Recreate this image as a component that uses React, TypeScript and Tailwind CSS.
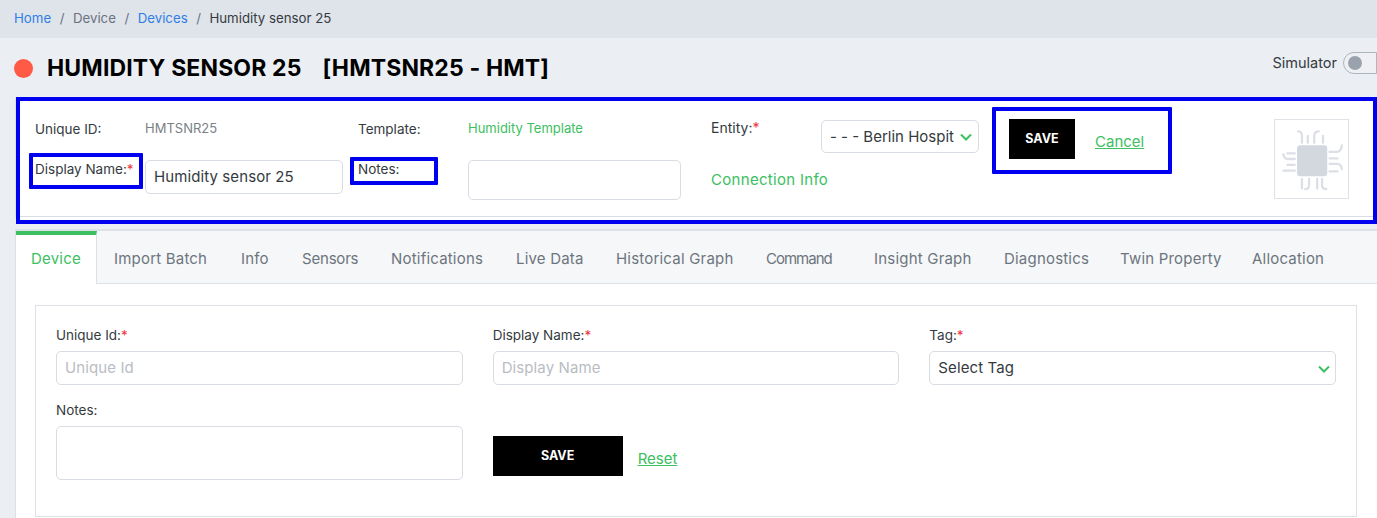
import React from "react";

const font = { fontFamily: "Inter, 'Noto Sans', sans-serif" };

function Req() {
  return <span className="text-[#f0343c]">*</span>;
}

function Chevron({ className }: { className: string }) {
  return (
    <svg viewBox="0 0 12 8" className={className} fill="none" stroke="#3cc061" strokeWidth="2">
      <path d="M1 1.5 L6 6.5 L11 1.5" />
    </svg>
  );
}

function Chip() {
  return (
    <svg viewBox="42 27 225 240" className="w-full h-full" fill="none" stroke="#dcdfe5" strokeWidth="7" strokeLinecap="round">
      <rect x="110" y="105" width="93" height="95" rx="10" fill="#d3d7de" stroke="none" />
      <path d="M125 97V75Q125 63 113 62M143 97V76M163 97V75Q163 63 177 62M190 97V76" />
      <path d="M125 208V238M147 208V228Q147 240 135 240M172 208V238M187 208V228Q187 240 200 240" />
      <path d="M80 130H103M103 147H82Q70 147 68 132M80 165H103M103 183H68" />
      <path d="M210 125H232Q246 125 248 105M210 145H235M210 162H232Q246 162 248 178M210 185H235" />
    </svg>
  );
}

const tabs = [
  { t: "Import Batch", w: "w-[127px]" },
  { t: "Info", w: "w-[61px]" },
  { t: "Sensors", w: "w-[89px] tracking-[-0.2px]" },
  { t: "Notifications", w: "w-[125px]" },
  { t: "Live Data", w: "w-[100px]" },
  { t: "Historical Graph", w: "w-[150px]" },
  { t: "Command", w: "w-[108px] tracking-[-1px]" },
  { t: "Insight Graph", w: "w-[130px]" },
  { t: "Diagnostics", w: "w-[116px]" },
  { t: "Twin Property", w: "w-[132px]" },
  { t: "Allocation", w: "w-[100px]" },
];

const inputCls = "w-full h-[34px] rounded-[5px] border border-[#d8dce3] bg-white px-2 pb-[1px] text-[15px] tracking-[0.1px] text-[#343a40] placeholder:text-[#b9bdc3] outline-none";

export default function App() {
  return (
    <div style={font} className="h-[518px] w-[1377px] overflow-hidden bg-[#ebeef3] text-[#343a40]">
      <nav className="flex h-[38px] items-center gap-[8.5px] bg-[#dfe3ea] pl-[14px] text-[13.25px]">
        <span className="text-[#2f7fe6]">Home</span>
        <span className="text-[#6b7280]">/</span>
        <span className="text-[#6b7280]">Device</span>
        <span className="text-[#6b7280]">/</span>
        <span className="text-[#2f7fe6]">Devices</span>
        <span className="text-[#6b7280]">/</span>
        <span>Humidity sensor 25</span>
      </nav>

      <header className="relative flex h-[59px] items-center pl-[14px] pt-[1px]">
        <span className="mr-[14px] h-[19px] w-[19px] rounded-full bg-[#ff5a45]" />
        <h1 className="flex gap-[21px] whitespace-pre text-[23px] font-bold uppercase tracking-[0.15px] text-black">
          <span>Humidity sensor 25</span>
          <span>[HMTSNR25 - HMT]</span>
        </h1>
        <div className="absolute right-0 top-[14px] flex items-center gap-[6px]">
          <span className="text-[14.5px]">Simulator</span>
          <span className="flex h-[22px] w-[34px] items-center rounded-l-full border border-[#adb5bd] bg-[#eef0f3] pl-[4px]">
            <span className="h-[14px] w-[14px] rounded-full bg-[#9aa3ad]" />
          </span>
        </div>
      </header>

      <section className="relative ml-[16px] h-[127px] w-[1361px] border-4 border-[#0000f0] bg-white">
        <div className="flex h-[116px] border-b border-[#d8dce3] pl-[15px] pt-[18px]">
          <div className="grid w-[676px] grid-cols-[110px_213px_110px_243px] grid-rows-[20px_auto] gap-y-[21px] text-[13.5px]">
            <div className="self-center">Unique ID:</div>
            <div className="self-center text-[13px] text-[#7a7f86]">HMTSNR25</div>
            <div className="self-center">Template:</div>
            <div className="self-center text-[13px] text-[#3cc061]">Humidity Template</div>
            <div className="-mt-[1px] leading-[20px]">Display Name:<Req /></div>
            <div><input readOnly value="Humidity sensor 25" className={`${inputCls} !w-[198px]`} /></div>
            <div className="-mt-[1px] leading-[20px]">Notes:</div>
            <div><textarea readOnly className="block h-[40px] w-[213px] resize-none rounded-[5px] border border-[#d8dce3] bg-white outline-none" /></div>
          </div>

          <div className="w-[281px] text-[14px]">
            <div className="flex items-start">
              <div className="-mt-[1px] w-[110px] leading-[20px]">Entity:<Req /></div>
              <div className="relative mt-[1px] w-[158px]">
                <select defaultValue="b" style={font} className="h-[33px] w-full appearance-none rounded-[5px] border border-[#d8dce3] bg-white pl-2 pr-[24px] pt-[1px] text-[15px] text-[#343a40] outline-none">
                  <option value="b">- - - Berlin Hospital</option>
                </select>
                <Chevron className="pointer-events-none absolute right-[7px] top-[13px] h-[8px] w-[12px]" />
              </div>
            </div>
            <div className="mt-[16px] text-[15px] tracking-[0.3px] text-[#3cc061]">Connection Info</div>
          </div>

          <div className="-mt-[12px] flex h-[67px] w-[180px] items-start rounded-[1px] border-4 border-[#0000f0] pl-[13px] pt-[8px]">
            <button className="h-[40px] w-[66px] bg-black text-[12.5px] font-bold text-white">SAVE</button>
            <a className="ml-[20px] mt-[12px] text-[15px] text-[#3cc061] underline">Cancel</a>
          </div>

          <div className="ml-[102px] h-[80px] w-[75px] border border-[#dfe3e8]">
            <Chip />
          </div>
        </div>

        <div className="absolute -left-[5px] -top-[4px] h-[120px] w-[1px] bg-[#dde1e6]" />
        <div className="absolute left-[9px] top-[52px] h-[36px] w-[114px] rounded-[1px] border-4 border-[#0000f0]" />
        <div className="absolute left-[330px] top-[56px] h-[28px] w-[88px] rounded-[1px] border-4 border-[#0000f0]" />
      </section>

      <section className="ml-[15px] mt-[5px] h-[289px] border-l border-t-2 border-[#dde1e6] bg-white">
        <div className="flex h-[53px] items-stretch border-b border-[#dde1e6] bg-[#f6f7f9] text-[15px] tracking-[0.2px] text-[#6c757d]">
          <div className="-mb-px flex w-[81px] items-center justify-center border-r border-t-4 border-r-[#dde1e6] border-t-[#3cc061] bg-white pb-[1px] text-[#3cc061]">Device</div>
          {tabs.map(({ t, w }) => (
            <div key={t} className={`flex items-center pl-[17px] pt-[5px] ${w}`}>{t}</div>
          ))}
        </div>

        <div className="ml-[19px] mt-[21px] h-[212px] w-[1322px] border border-[#dde1e6] px-[20px] pt-[20px] text-[13.5px]">
          <div className="grid grid-cols-3 gap-x-[30px]">
            <div>
              <label className="block h-[25px] leading-[18px]">Unique Id:<Req /></label>
              <input placeholder="Unique Id" className={inputCls} />
            </div>
            <div>
              <label className="block h-[25px] leading-[18px]">Display Name:<Req /></label>
              <input placeholder="Display Name" className={inputCls} />
            </div>
            <div>
              <label className="block h-[25px] leading-[18px]">Tag:<Req /></label>
              <div className="relative">
                <select defaultValue="s" style={font} className={`${inputCls} appearance-none !pb-0`}>
                  <option value="s">Select Tag</option>
                </select>
                <Chevron className="pointer-events-none absolute right-[6px] top-[14px] h-[8px] w-[12px]" />
              </div>
            </div>
            <div className="mt-[16px]">
              <label className="block h-[25px] leading-[18px]">Notes:</label>
              <textarea readOnly className="block h-[54px] w-full resize-none rounded-[5px] border border-[#d8dce3] bg-white outline-none" />
            </div>
            <div className="col-span-2 mt-[51px] flex items-start">
              <button className="h-[40px] w-[130px] bg-black pt-[1px] text-[12.5px] font-bold text-white">SAVE</button>
              <a className="ml-[15px] mt-[12px] text-[15px] text-[#3cc061] underline">Reset</a>
            </div>
          </div>
        </div>
      </section>
    </div>
  );
}
